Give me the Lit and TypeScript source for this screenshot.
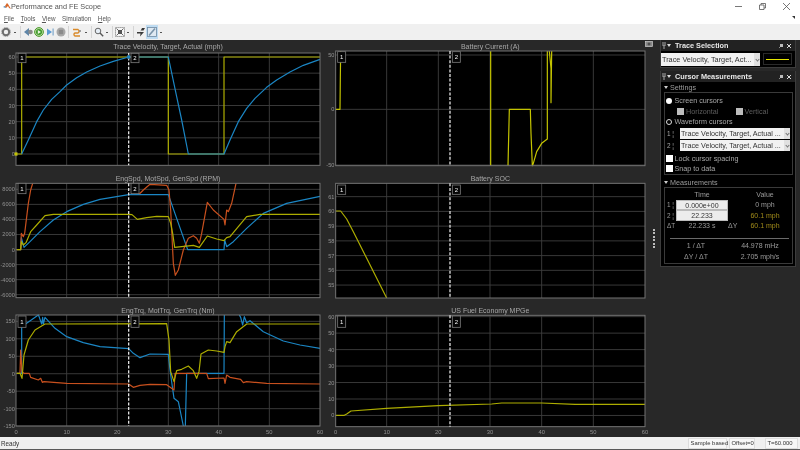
import { LitElement, html, css, svg } from "lit";
import { customElement, property } from "lit/decorators.js";

const Y = "#adad00";
const YB = "#c4c400";
const B = "#1b86c4";
const O = "#c8501e";

interface Trace { color: string; segs: string[] }
interface Tick { v: string; y: number }
interface Plot {
  title: string;
  h: number; // cell height
  box: [number, number, number, number]; // x0,y0,x1,y1 in data coords
  grid: number[];
  ticks: Tick[];
  labelY: [number, number];
  titleY: number;
  cursorX: number;
  xticks?: boolean;
  traces: Trace[];
  dots?: [number, number, string][];
}

const seq = (vals: string[], start: number, step: number): Tick[] =>
  vals.map((v, i) => ({ v, y: start + i * step }));

const LEFT_GRID = [200, 352, 505, 656, 808];
const RIGHT_GRID = [185, 340, 495, 650, 805];

const PLOTS: Plot[] = [
  {
    title: "Trace Velocity, Target, Actual (mph)", h: 130,
    box: [48, 39, 960, 376], grid: LEFT_GRID, titleY: 6.5, cursorX: 386, labelY: [40, 68],
    ticks: seq(["60", "50", "40", "30", "20", "10", "0"], 51, 48.5),
    traces: [
      { color: Y, segs: ["48,342 65,342 65,51 505,51 505,342 672,342 672,51 960,51"] },
      { color: B, segs: ["65,342 85,300 110,245 130,210 155,178 180,155 200,135 230,113 260,96 300,78 340,64 386,51 505,51 530,170 545,240 565,342 672,342 690,300 715,245 740,205 765,175 800,142 830,120 870,96 910,76 960,58"] },
    ],
    dots: [[48, 342, "#c4c400"], [386, 51, B]],
  },
  {
    title: "EngSpd, MotSpd, GenSpd (RPM)", h: 130,
    box: [48, 40, 960, 383], grid: LEFT_GRID, titleY: 8, cursorX: 386, labelY: [40, 71],
    ticks: seq(["8000", "6000", "4000", "2000", "0", "-2000", "-4000", "-6000"], 58, 45.15),
    traces: [
      { color: B, segs: ["50,239 62,239 64,203 72,232 90,215 120,185 160,150 200,125 250,103 300,88 386,74 505,74 563,239 672,239 674,210 680,230 700,215 740,175 790,130 860,100 960,79"] },
      { color: O, segs: ["50,239 62,239 64,190 70,200 74,190 85,100 92,60 98,40", "418,72 430,60 450,43 500,46 507,60 512,120 520,280 526,316 535,300 550,240 565,205 580,197 590,205 598,220 605,190 622,97 640,120 672,148 675,165 680,120 685,125 695,100 708,40"] },
      { color: Y, segs: ["50,239 62,239 64,215 70,225 78,218 92,185 110,165 135,137 160,133 386,133 396,134 412,148 440,143 470,139 505,140 512,160 518,190 524,232 545,230 580,226 598,232 622,198 650,207 672,212 680,203 690,200 715,170 740,140 780,133 960,133"] },
    ],
  },
  {
    title: "EngTrq, MotTrq, GenTrq (Nm)", h: 137,
    box: [48, 45, 960, 378], grid: LEFT_GRID, titleY: 10, cursorX: 386, labelY: [48, 82], xticks: true,
    ticks: seq(["150", "100", "50", "0", "-50", "-100", "-150"], 64, 52.4),
    traces: [
      { color: B, segs: ["50,220 65,220 65,80 115,45 118,52 125,72 128,52 130,72 135,52 165,85 200,110 250,128 300,140 386,146 400,160 420,173 450,162 505,163 510,210 522,295 535,305 550,378", "556,378 560,220 672,220 673,45", "718,45 722,52 728,75 733,50 740,68 750,62 790,95 850,123 900,135 960,145"] },
      { color: O, segs: ["50,220 60,220 62,150 66,215 72,220 88,220 92,232 115,240 122,235 127,247 132,245 200,250 386,252 400,262 420,256 450,253 500,254 522,270 525,220 620,220 625,236 672,234 675,250 680,225 690,232 722,238 730,248 740,245 800,250 960,252"] },
      { color: Y, segs: ["50,220 60,220 66,235 72,165 85,120 105,90 135,72 500,71 507,120 512,215 522,245 530,212 545,208 565,198 580,212 590,235 597,215 603,162 625,150 650,153 672,157 675,140 680,125 690,128 710,95 740,72 960,72"] },
    ],
  },
  {
    title: "Battery Current (A)", h: 130,
    box: [32, 33, 960, 377], grid: RIGHT_GRID, titleY: 6.5, cursorX: 375, labelY: [35, 67],
    ticks: [{ v: "50", y: 45 }, { v: "0", y: 208 }, { v: "-50", y: 375 }],
    traces: [
      { color: YB, segs: ["32,208 45,208 46,110 47,33", "497,33 497,377", "549,377 552,250 553,208 616,208 618,280 622,377 625,370 635,335 650,310 667,297 667,33", "673,33 678,85 678,188 680,33"] },
    ],
  },
  {
    title: "Battery SOC", h: 130,
    box: [32, 40, 960, 384], grid: RIGHT_GRID, titleY: 8, cursorX: 375, labelY: [45, 73],
    ticks: seq(["61", "60", "59", "58", "57", "56", "55"], 80, 44.2),
    traces: [{ color: Y, segs: ["32,123 47,123 65,147 85,185 185,384"] }],
  },
  {
    title: "US Fuel Economy MPGe", h: 137,
    box: [32, 46, 960, 380], grid: RIGHT_GRID, titleY: 10, cursorX: 375, labelY: [48, 82], xticks: true,
    ticks: seq(["60", "50", "40", "30", "20", "10", "0"], 50, 49.4),
    traces: [{ color: Y, segs: ["32,346 58,346 65,342 78,333 185,325 340,317 500,312 530,309 650,309 750,313 960,313"] }],
  },
];

const pts = (s: string) =>
  s.split(" ").map((p) => {
    const [x, y] = p.split(",").map(Number);
    return `${(x / 3).toFixed(2)},${(y / 3).toFixed(2)}`;
  }).join(" ");

@customElement("scope-plot")
export class ScopePlot extends LitElement {
  @property({ attribute: false }) plot!: Plot;

  static styles = css`
    :host { display: block; }
    svg { display: block; overflow: visible; width: 100%; height: 100%; }
    text { font-family: "Liberation Sans", Arial, sans-serif; }
    .title { fill: #a8a8a8; font-size: 7px; text-anchor: middle; dominant-baseline: central; }
    .tick { fill: #929292; font-size: 5.6px; text-anchor: end; dominant-baseline: central; }
    .xtick { fill: #929292; font-size: 5.8px; text-anchor: middle; dominant-baseline: central; }
    .bg { fill: #000; }
    .frame { fill: none; stroke: #737373; stroke-width: 1; }
    .grid { stroke: #3e3e3e; stroke-width: 0.9; }
    .tr { fill: none; stroke-width: 1.2; stroke-linejoin: round; }
    .cur { stroke: #e4e4e4; stroke-width: 1.3; stroke-dasharray: 3 1.6; }
    .lab { fill: #050505; stroke: #7c7c7c; stroke-width: 0.8; }
    .labt { fill: #f4f4f4; font-size: 6px; text-anchor: middle; dominant-baseline: central; }
  `;

  render() {
    const p = this.plot;
    const [x0, y0, x1, y1] = p.box;
    const xs = [x0, ...p.grid, x1];
    const lx = [x0 + 6, p.cursorX + 7];
    return html`<svg viewBox="0 0 325 ${p.h}">
      <text class="title" x=${(x0 + x1) / 6} y=${p.titleY}>${p.title}</text>
      <rect class="bg" x=${x0 / 3} y=${y0 / 3} width=${(x1 - x0) / 3} height=${(y1 - y0) / 3}></rect>
      ${p.grid.map((g) => svg`<line class="grid" x1=${g / 3} x2=${g / 3} y1=${y0 / 3} y2=${y1 / 3}></line>`)}
      ${p.ticks.map((t) => svg`<line class="grid" x1=${x0 / 3} x2=${x1 / 3} y1=${t.y / 3} y2=${t.y / 3}></line>
        <text class="tick" x=${x0 / 3 - 1.2} y=${t.y / 3}>${t.v}</text>`)}
      ${p.traces.map((t) => t.segs.map((s) => svg`<polyline class="tr" stroke=${t.color} points=${pts(s)}></polyline>`))}
      <rect class="frame" x=${x0 / 3} y=${y0 / 3} width=${(x1 - x0) / 3} height=${(y1 - y0) / 3}></rect>
      <line class="cur" x1=${p.cursorX / 3} x2=${p.cursorX / 3} y1=${y0 / 3} y2=${y1 / 3}></line>
      ${(p.dots ?? []).map(([x, y, c]) => svg`<circle cx=${x / 3} cy=${y / 3} r="1.9" fill=${c} stroke="#555" stroke-width="0.4"></circle>`)}
      ${lx.map((x, i) => svg`<rect class="lab" x=${x / 3} y=${p.labelY[0] / 3} width="8" height=${(p.labelY[1] - p.labelY[0]) / 3}></rect>
        <text class="labt" x=${x / 3 + 4} y=${(p.labelY[0] + p.labelY[1]) / 6}>${i + 1}</text>`)}
      ${p.xticks ? xs.map((x, i) => svg`<text class="xtick" x=${x / 3} y=${395 / 3}>${i * 10}</text>`) : ""}
    </svg>`;
  }
}

@customElement("app-root")
export class AppRoot extends LitElement {
  static styles = css`
    :host {
      display: flex; flex-direction: column; width: 800px; height: 450px; overflow: hidden;
      background: #fff; font-family: "Liberation Sans", Arial, sans-serif; color: #333;
      filter: blur(0.3px);
    }
    .titlebar { height: 12px; display: flex; align-items: center; padding: 0 3px; font-size: 7.3px; color: #555; flex: none; }
    .app-icon { width: 8px; height: 8px; flex: none; }
    .titlebar .name { flex: 1; }
    .winbtns { display: flex; align-items: center; height: 12px; margin-right: 6px; gap: 15px; }
    .winbtns svg { width: 9px; height: 9px; display: block; }
    .menubar { height: 12px; display: flex; align-items: center; padding-left: 4px; gap: 6.5px; font-size: 6.3px; color: #555; flex: none; position: relative; }
    .menubar .u { text-decoration: underline; }
    .menubar .grip { position: absolute; right: 3px; top: 3px; width: 5px; height: 5px; }
    .toolbar { height: 16px; flex: none; background: #f0f0f0; display: flex; align-items: center; }
    .toolbar svg { display: block; }
    .tb { width: 11px; height: 16px; display: flex; align-items: center; justify-content: center; flex: none; }
    .tb.w12 { width: 12px; }
    .tb.w13 { width: 13px; }
    .tb.active { width: 12px; height: 14px; background: #bfdcf2; }
    .tb svg { width: 10px; height: 10px; }
    .caret { width: 6px; display: flex; justify-content: center; flex: none; }
    .caret::before { content: ""; width: 2px; height: 1px; background: #555; }
    .sep { width: 1px; height: 12px; margin: 0 1.5px; background: #d4d4d4; flex: none; }
    .main { flex: 1; min-height: 0; background: #282828; display: flex; }
    .plots { width: 650px; flex: none; display: grid; grid-template-columns: 325px 325px; grid-template-rows: 130px 130px 137px; grid-auto-flow: column; }
    .sash { width: 10px; flex: none; display: flex; flex-direction: column; align-items: center; justify-content: center; gap: 1.6px; padding-right: 2px; box-sizing: border-box; position: relative; }
    .sash i { width: 2px; height: 2px; background: #eee; border-radius: 1px; }
    .undock { position: absolute; left: -5px; top: 1px; width: 8px; height: 6px; }
    .side { width: 136px; flex: none; display: flex; flex-direction: column; gap: 3px; color: #a8a8a8; font-size: 7.2px; }
    .panel { background: #000; border: 1px solid #3c3c3c; border-top: 0; box-sizing: border-box; }
    .phead { height: 11px; background: #222; display: flex; align-items: center; padding: 0 3px 0 1px; color: #e8e8e8; font-weight: bold; font-size: 7.3px; }
    .phead .tt { flex: 1; margin-left: 3px; }
    .phead svg { display: block; flex: none; }
    .phead .right { display: flex; gap: 2px; }
    .tracebody { height: 16px; display: flex; align-items: center; gap: 3px; }
    .select { background: #f2f2f2; color: #333; display: flex; align-items: center; box-sizing: border-box; padding-left: 1px; white-space: nowrap; overflow: hidden; }
    .select span { flex: 1; overflow: hidden; }
    .select b { width: 6px; flex: none; height: 100%; background: #e0e0e0; position: relative; }
    .select b::after { content: ""; position: absolute; left: 1.5px; top: 40%; width: 2px; height: 2px; border: solid #777; border-width: 0 0.7px 0.7px 0; transform: rotate(45deg); }
    .tracebody .select { width: 99px; height: 13px; font-size: 7.3px; }
    .swatch { width: 29px; height: 12px; border: 1px solid #2a2a2a; box-sizing: border-box; display: flex; align-items: center; justify-content: center; }
    .swatch i { width: 23px; height: 1px; background: #e6e600; }
    .curpanel { height: 196px; }
    .sec { height: 10px; display: flex; align-items: center; padding-left: 3px; color: #9c9c9c; font-size: 7.2px; gap: 1px; }
    .sec.second { margin-top: 2px; }
    .tri { width: 0; height: 0; border: 2px solid transparent; border-top: 3px solid #ccc; border-bottom: 0; flex: none; margin-right: 1px; }
    .box { margin: 0 2px 0 3px; border: 1px solid #3a3a3a; box-sizing: border-box; }
    .settings { height: 83px; padding-top: 2.5px; display: flex; flex-direction: column; }
    .row { display: flex; align-items: center; height: 10.5px; flex: none; gap: 1.5px; }
    .radio { width: 6px; height: 6px; border-radius: 50%; background: #fff; margin: 0 1px; box-sizing: border-box; flex: none; }
    .radio.off { background: #000; border: 1.5px solid #ddd; }
    .chk { width: 7px; height: 7px; background: #fff; flex: none; }
    .chk.dis { background: #bdbdbd; }
    .dim { color: #5e5e5e; }
    .subrow { padding-left: 12px; gap: 2px; }
    .subrow .col { width: 58px; display: flex; align-items: center; gap: 2px; }
    .tcur { display: grid; grid-template-columns: 15px 110px; row-gap: 1px; margin-top: 1px; }
    .tcur .n { font-size: 6.4px; padding-left: 2px; display: flex; align-items: center; }
    .tcur .select { height: 11px; font-size: 7.2px; }
    .checks { margin-top: 2px; }
    .checks .chk, .snap .chk { margin-left: 1px; }
    .meas { height: 77px; padding: 1px 0 0 2px; }
    .mgrid { display: grid; grid-template-columns: 9px 52px 9px 56px; grid-auto-rows: 10.5px; align-items: center; color: #9a9a9a; font-size: 7px; text-align: center; white-space: nowrap; }
    .mgrid .s { grid-column: 2; }
    .mgrid .v { grid-column: 4; }
    .mgrid .l { text-align: left; font-size: 6.4px; }
    .mgrid .gold { color: #a08a1a; }
    .inp { background: #ececec; color: #333; height: 10.5px; line-height: 10.5px; border: 0.5px solid #bbb; box-sizing: border-box; }
    .hr { height: 1px; background: #6a6a6a; margin: 7px 3px 0.5px; }
    .rate { display: grid; grid-template-columns: 58px 70px; grid-auto-rows: 11px; align-items: center; text-align: center; color: #9a9a9a; font-size: 7px; white-space: nowrap; }
    .status { height: 12px; flex: none; background: #f0f0f0; display: flex; align-items: center; font-size: 5.9px; color: #333; padding-left: 1px; gap: 2px; }
    .status .ready { flex: 1; font-size: 6.3px; }
    .status .cell { height: 11px; display: flex; align-items: center; box-sizing: border-box; padding-left: 1.5px; background: #f7f7f7; border: 0.5px solid #ddd; white-space: nowrap; flex: none; }
    .c1 { width: 39px; }
    .c2 { width: 26px; margin-right: 8px; }
    .c3 { width: 33px; margin-right: 2px; }
    .foot { height: 1px; flex: none; background: #5a5a5a; }
  `;

  private ph(title: string) {
    return html`<div class="phead">
      <svg width="4" height="7" viewBox="0 0 4 7"><path d="M0 1h4M0 3h4M2 3v4" stroke="#ccc" stroke-width="0.8" fill="none"/></svg>
      <svg width="6" height="7" viewBox="0 0 6 7"><path d="M1 2h4L3 5z" fill="#ddd"/></svg>
      <span class="tt">${title}</span>
      <span class="right">
        <svg width="5" height="6" viewBox="0 0 5 6"><path d="M1 1h3v3H1z" fill="#bbb"/><path d="M0 5l2-2" stroke="#bbb" stroke-width="0.7"/></svg>
        <svg width="6" height="6" viewBox="0 0 6 6"><path d="M1 1l4 4M5 1L1 5" stroke="#ddd" stroke-width="1"/></svg>
      </span>
    </div>`;
  }

  render() {
    return html`
      <div class="titlebar">
        <svg class="app-icon" viewBox="0 0 8 8"><path d="M0 5l2-1 2-3 1 1 3 5-2-1-1-2-2 2-1-2z" fill="#d9682a"/><path d="M0 5l2-1 1 2z" fill="#3f7fb5"/></svg>
        <span class="name">Performance and FE Scope</span>
        <span class="winbtns">
          <svg viewBox="0 0 9 9"><path d="M1 4.5h7" stroke="#555" stroke-width="0.8"/></svg>
          <svg viewBox="0 0 9 9"><path d="M1.5 3h4.5v4.5h-4.500zM3 3V1.5h4.500V6H6" fill="none" stroke="#555" stroke-width="0.8"/></svg>
          <svg viewBox="0 0 9 9"><path d="M1 1l7 7M8 1l-7 7" stroke="#555" stroke-width="0.8"/></svg>
        </span>
      </div>
      <div class="menubar">
        <span><span class="u">F</span>ile</span>
        <span><span class="u">T</span>ools</span>
        <span><span class="u">V</span>iew</span>
        <span>S<span class="u">i</span>mulation</span>
        <span><span class="u">H</span>elp</span>
        <svg class="grip" viewBox="0 0 5 5"><path d="M0 1h3v3z" fill="#333"/></svg>
      </div>
      <div class="toolbar">
        <span class="tb w12"><svg viewBox="0 0 10 10"><circle cx="5" cy="5" r="3.2" fill="none" stroke="#6e6e6e" stroke-width="2"/><circle cx="5" cy="5" r="4.6" fill="none" stroke="#9a9a9a" stroke-width="0.9" stroke-dasharray="1.3 1.1"/></svg></span><span class="caret"></span>
        <span class="sep"></span>
        <span class="tb"><svg viewBox="0 0 10 10"><path d="M6 1v8L1 5z" fill="#5f86a8"/><circle cx="7.5" cy="5" r="2.3" fill="#8a8a8a"/></svg></span>
        <span class="tb"><svg viewBox="0 0 10 10"><circle cx="5" cy="5" r="4.4" fill="#b9d8a0" stroke="#4d9a2e" stroke-width="1"/><circle cx="5" cy="5" r="3" fill="#3e9a2a"/><path d="M3.8 3v4L7 5z" fill="#eaf6df"/></svg></span>
        <span class="tb"><svg viewBox="0 0 10 10"><path d="M2 1.5v7L7 5z" fill="#5b9bd5"/><path d="M7.5 1.5h1.2v7H7.5z" fill="#7fa8cc"/></svg></span>
        <span class="tb"><svg viewBox="0 0 10 10"><circle cx="5" cy="5" r="4.5" fill="#a8a8a8"/><rect x="2.8" y="2.8" width="4.4" height="4.4" fill="#8a8a8a"/></svg></span>
        <span class="sep"></span>
        <span class="tb w13"><svg viewBox="0 0 10 10"><path d="M1 2.500h5a2 2 0 0 1 0 3.500H3a1.600 1.600 0 0 0 0 3h5" fill="none" stroke="#d98a2b" stroke-width="1.4"/><circle cx="8" cy="4" r="1" fill="#888"/></svg></span><span class="caret"></span>
        <span class="sep"></span>
        <span class="tb"><svg viewBox="0 0 10 10"><circle cx="4" cy="4" r="2.8" fill="#e6eef6" stroke="#666" stroke-width="1"/><path d="M6 6l3.2 3.2" stroke="#555" stroke-width="1.4"/></svg></span><span class="caret"></span>
        <span class="sep"></span>
        <span class="tb"><svg viewBox="0 0 10 10"><rect x="0.5" y="0.5" width="9" height="9" fill="#f5f5f5" stroke="#666" stroke-width="0.8" stroke-dasharray="1.2 0.8"/><rect x="3" y="3" width="4" height="4" fill="#555"/><path d="M1.5 1.5l2 2M8.500 1.5l-2 2M1.500 8.500l2-2M8.500 8.500l-2-2" stroke="#444" stroke-width="0.8"/></svg></span><span class="caret"></span>
        <span class="sep"></span>
        <span class="tb"><svg viewBox="0 0 10 10"><path d="M1 5h3l2-4h3L7.500 3.500H5L4 5h4L4 9.500l.5-3H1z" fill="#3a3a3a"/></svg></span>
        <span class="tb active"><svg viewBox="0 0 10 10"><rect x="0.5" y="0.5" width="9" height="9" fill="#dfe9f2" stroke="#6f8ba3" stroke-width="0.8"/><path d="M2 8.500L8 1.500" stroke="#7a94aa" stroke-width="1.6"/></svg></span><span class="caret"></span>
      </div>
      <div class="main">
        <div class="plots">${PLOTS.map((p) => html`<scope-plot .plot=${p}></scope-plot>`)}</div>
        <div class="sash">
          <svg class="undock" viewBox="0 0 8 6"><rect x="0.5" y="0.5" width="7" height="5" fill="#888" stroke="#ccc" stroke-width="0.7"/><path d="M4 1.500v3M2.500 3h3" stroke="#222" stroke-width="0.7"/></svg>
          <i></i><i></i><i></i><i></i><i></i><i></i>
        </div>
        <div class="side">
          <div class="panel">
            ${this.ph("Trace Selection")}
            <div class="tracebody">
              <div class="select"><span>Trace Velocity, Target, Act...</span><b></b></div>
              <div class="swatch"><i></i></div>
            </div>
          </div>
          <div class="panel curpanel">
            ${this.ph("Cursor Measurements")}
            <div class="sec"><span class="tri"></span>Settings</div>
            <div class="box settings">
              <div class="row"><span class="radio"></span>Screen cursors</div>
              <div class="row subrow dim">
                <span class="col"><span class="chk dis"></span>Horizontal</span>
                <span class="col"><span class="chk dis"></span>Vertical</span>
              </div>
              <div class="row"><span class="radio off"></span>Waveform cursors</div>
              <div class="tcur">
                <span class="n">1 ¦</span><div class="select"><span>Trace Velocity, Target, Actual ...</span><b></b></div>
                <span class="n">2 ¦</span><div class="select"><span>Trace Velocity, Target, Actual ...</span><b></b></div>
              </div>
              <div class="row checks"><span class="chk"></span>Lock cursor spacing</div>
              <div class="row snap"><span class="chk"></span>Snap to data</div>
            </div>
            <div class="sec second"><span class="tri"></span>Measurements</div>
            <div class="box meas">
              <div class="mgrid">
                <span class="s">Time</span><span class="v">Value</span>
                <span class="l">1 ¦</span><span class="inp">0.000e+00</span><span class="v">0 mph</span>
                <span class="l">2 ¦</span><span class="inp">22.233</span><span class="v gold">60.1 mph</span>
                <span class="l">ΔT</span><span>22.233 s</span><span>ΔY</span><span class="gold">60.1 mph</span>
              </div>
              <div class="hr"></div>
              <div class="rate">
                <span>1 / ΔT</span><span>44.978 mHz</span>
                <span>ΔY / ΔT</span><span>2.705 mph/s</span>
              </div>
            </div>
          </div>
        </div>
      </div>
      <div class="status">
        <span class="ready">Ready</span>
        <span class="cell c1">Sample based</span>
        <span class="cell c2">Offset=0</span>
        <span class="cell c3">T=60.000</span>
      </div>
      <div class="foot"></div>
    `;
  }
}
